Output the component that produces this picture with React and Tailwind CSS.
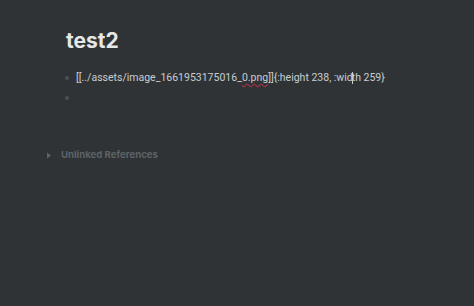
export default function App() {
  return (
    <div className="w-[474px] h-[306px] bg-[#2f3336] overflow-hidden" style={{ fontFamily: "Inter, 'Open Sans', sans-serif" }}>
      <div className="pl-[66px] pt-[27px]">
        <h1 className="text-[21px] leading-[28px] font-bold text-[#e6e7e7]">test2</h1>
      </div>
      <div className="pl-[62px] pt-[13px] flex flex-col">
        <div className="flex items-center h-[20px]">
          <div className="w-[10px] flex justify-center"><div className="w-[4px] h-[4px] rounded-full bg-[#4b5155]"></div></div>
          <div className="pl-[4px] text-[10.5px] text-[#c9cdcf] whitespace-nowrap" style={{ fontFamily: "Roboto, sans-serif" }}>
            [[../assets/image_1661953175016_<span className="underline decoration-wavy decoration-[#b0304a] underline-offset-2">0.png</span>]]{"{"}:height 238, :wid<span className="inline-block w-px h-[12px] bg-[#c9cdcf] align-middle -mx-px"></span>th 259{"}"}
          </div>
        </div>
        <div className="flex items-center h-[20px]">
          <div className="w-[10px] flex justify-center"><div className="w-[4px] h-[4px] rounded-full bg-[#4b5155]"></div></div>
        </div>
      </div>
      <div className="pl-[46px] pt-[40px] flex items-center gap-[9px]">
        <svg width="6" height="7" viewBox="0 0 6 7"><path d="M1 0.5 L5 3.5 L1 6.5 Z" fill="#5d6366" /></svg>
        <span className="text-[9.6px] font-bold text-[#5d6366]">Unlinked References</span>
      </div>
    </div>
  );
}
